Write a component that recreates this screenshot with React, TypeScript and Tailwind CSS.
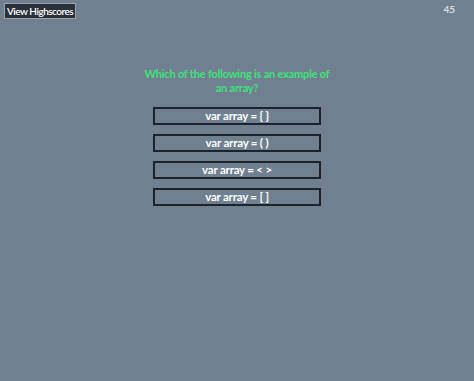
import React from "react";

export default function App() {
  const answers = ["var array = { }", "var array = ( )", "var array = < >", "var array = [ ]"];
  return (
    <div
      className="w-[474px] h-[381px] bg-[#708090] relative overflow-hidden"
      style={{ fontFamily: 'Lato, "Liberation Sans", sans-serif' }}
    >
      <div className="flex justify-between items-start">
        <button className="ml-[4px] mt-[3px] h-[16px] px-[2px] bg-[#2b313a] border border-[#9aa3ad] text-white text-[10px] tracking-[-0.5px] leading-[14px] font-semibold">
          View Highscores
        </button>
        <div className="mr-[19px] mt-[3px] text-[10px] leading-[12px] text-[#d8dde3] font-bold">45</div>
      </div>
      <div className="flex flex-col items-center mt-[48px]">
        <div className="w-[192px] text-center text-[#3fe07c] text-[11px] tracking-[-0.2px] leading-[14px] font-bold">
          Which of the following is an example of an array?
        </div>
        <div className="flex flex-col gap-[9px] mt-[12px]">
          {answers.map((a) => (
            <div
              key={a}
              className="w-[168px] h-[18px] border-2 border-[#1d222b] text-white text-[11.5px] tracking-[-0.2px] leading-[14px] font-bold flex items-center justify-center"
            >
              {a}
            </div>
          ))}
        </div>
      </div>
    </div>
  );
}
